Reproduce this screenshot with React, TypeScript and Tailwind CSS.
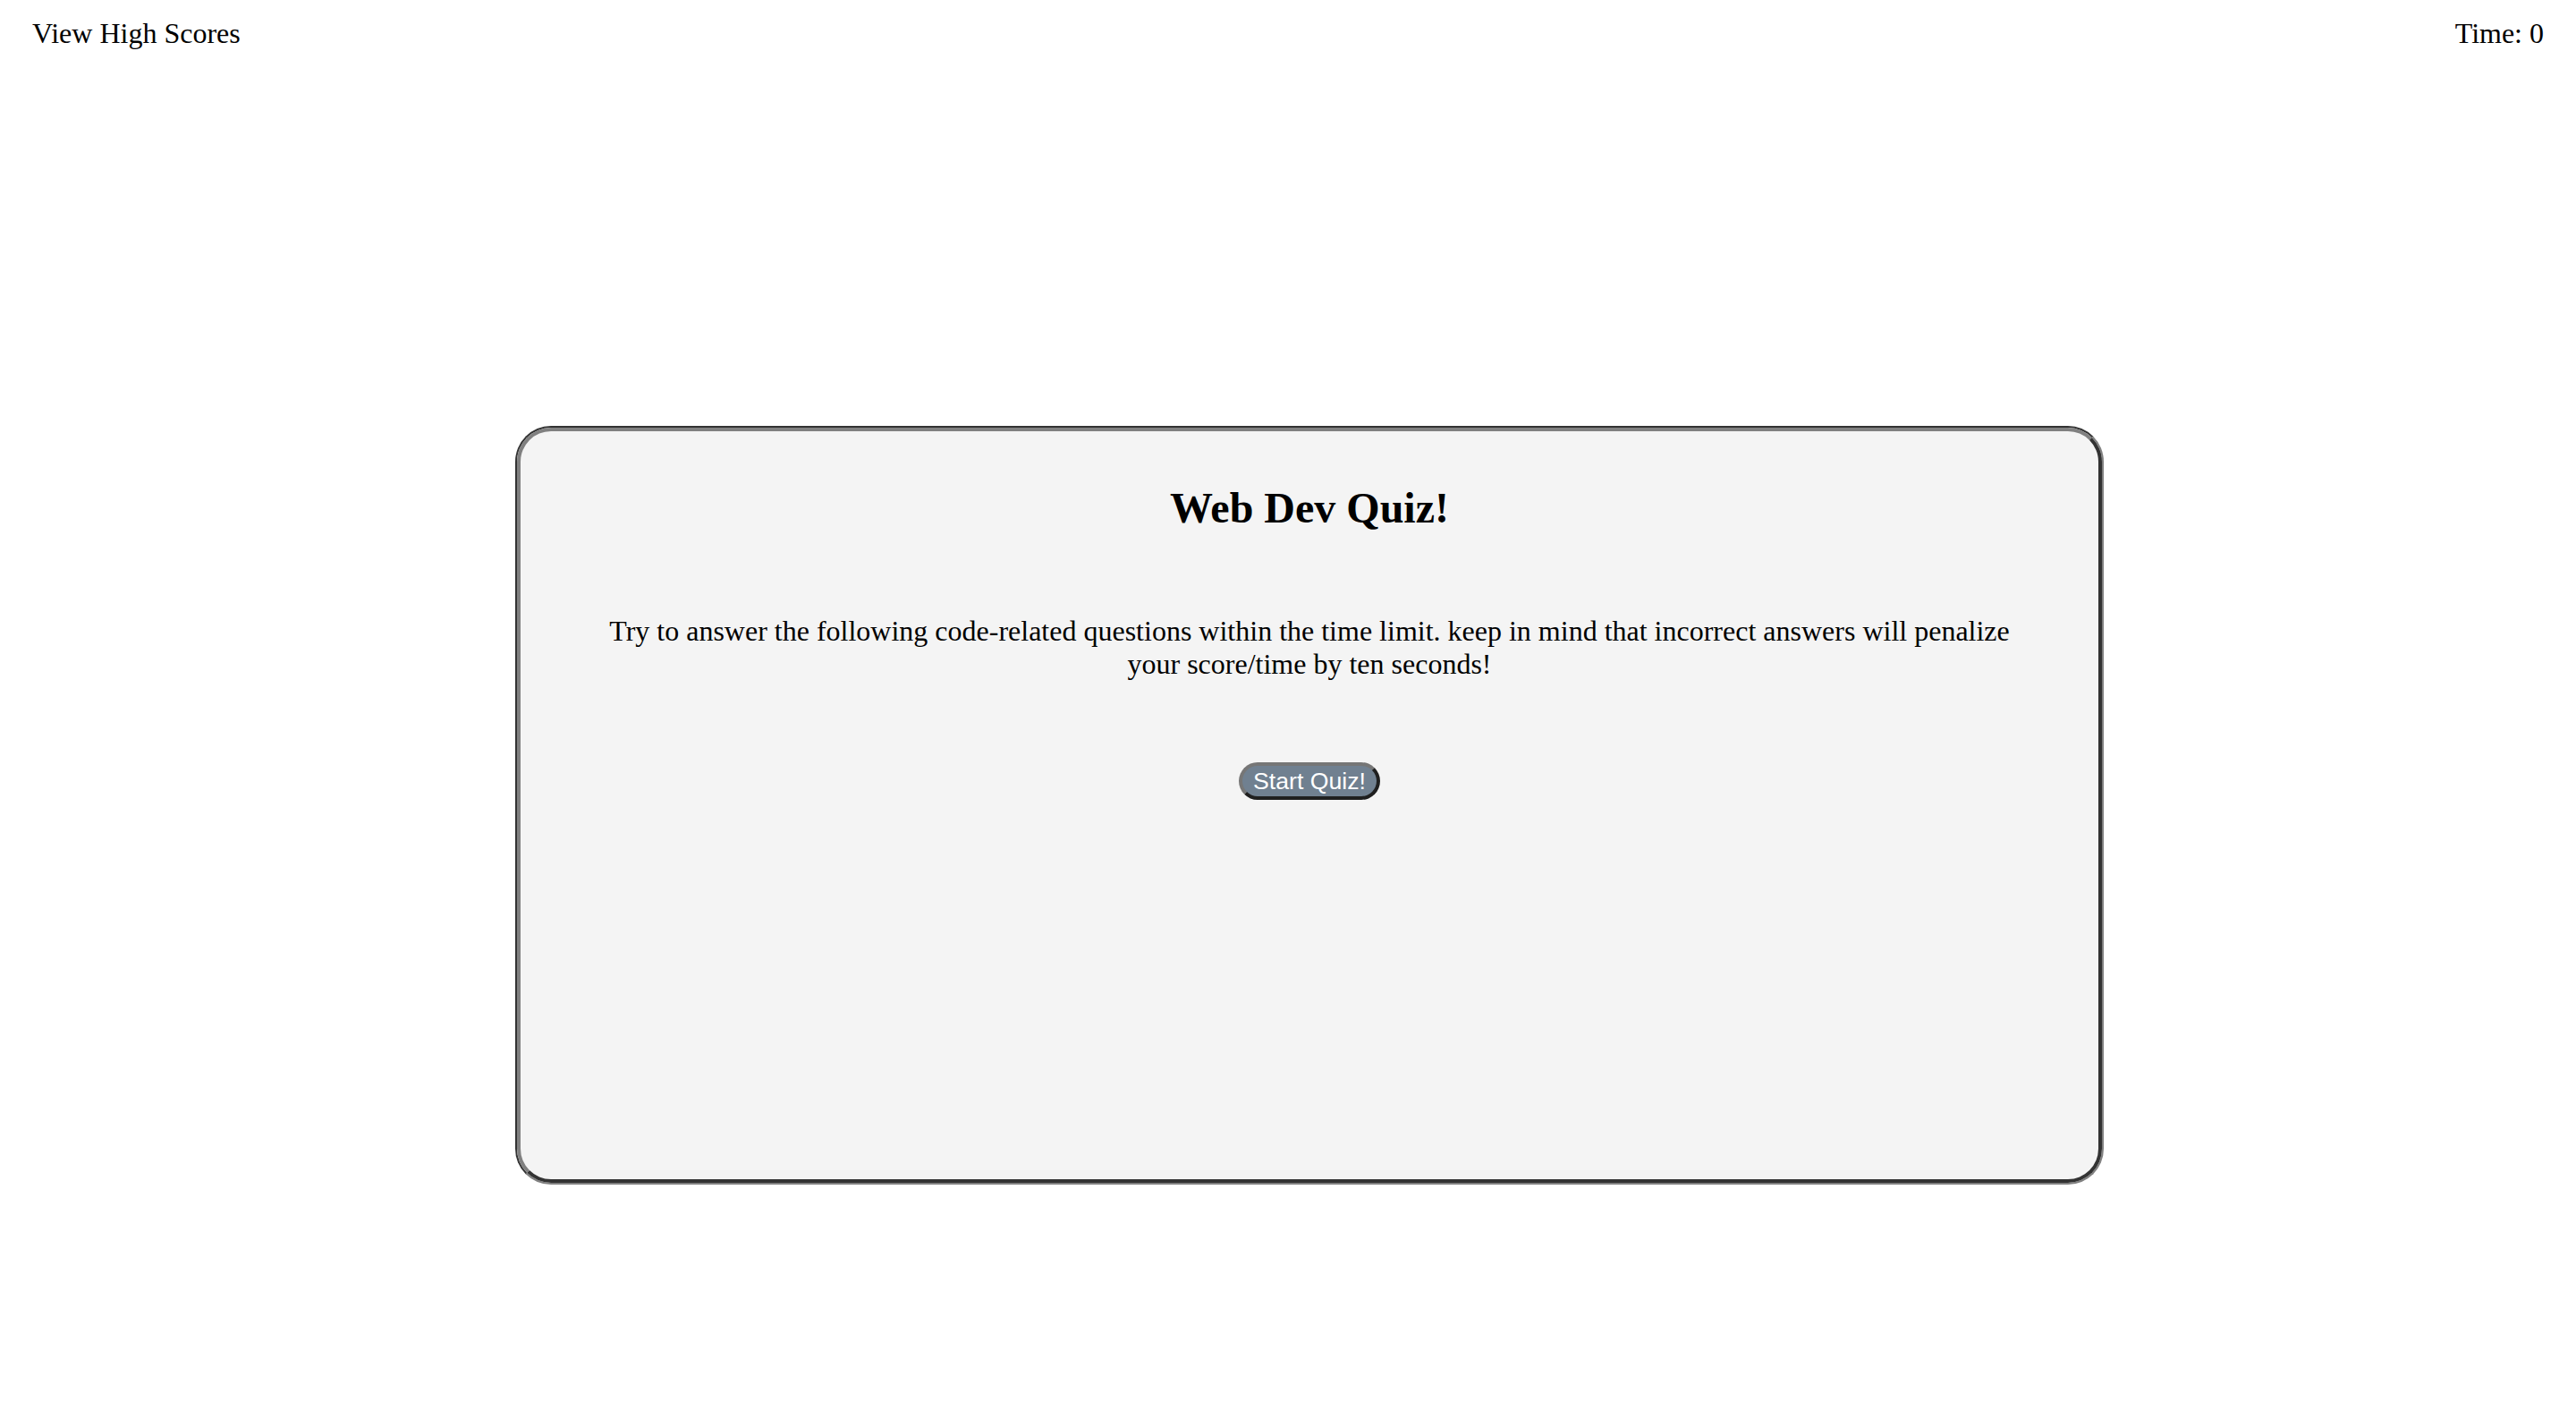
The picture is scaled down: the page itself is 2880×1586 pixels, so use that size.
import React from 'react';

const App: React.FC = () => {
  return (
    <div className="min-h-screen bg-white text-black font-['Liberation_Serif','Times_New_Roman',serif]">
      <header className="flex items-start justify-between px-[36px] pt-[19px] text-[32px] leading-[1.15]">
        <span>View High Scores</span>
        <span>Time: 0</span>
      </header>

      <main className="ml-[576px] mt-[420px] w-[1776px]">
        {/* groove-style frame: dark outer edge top/left, light outer edge bottom/right */}
        <div className="rounded-[40px] border-2 border-t-[#333333] border-l-[#333333] border-b-[#808080] border-r-[#808080]">
          <section className="flex h-[844px] flex-col items-center rounded-[38px] border-4 border-t-[#808080] border-l-[#808080] border-b-[#333333] border-r-[#333333] bg-[#f4f4f4] pt-[58px]">
            <h2 className="text-[48px] font-bold leading-[1.15]">Web Dev Quiz!</h2>
            <p className="mt-[92px] px-[86px] text-center text-[32px] leading-[1.15]">
              Try to answer the following code-related questions within the time limit. keep in mind that incorrect answers will penalize your score/time by ten seconds!
            </p>
            <button className="mt-[91px] rounded-full border-[4px] border-t-[#767676] border-l-[#767676] border-b-[#1f1f1f] border-r-[#1f1f1f] bg-[#708090] px-[12px] py-[2px] font-['Liberation_Sans',Arial,sans-serif] text-[26.67px] leading-[1.15] text-white">
              Start Quiz!
            </button>
          </section>
        </div>
      </main>
    </div>
  );
};

export default App;
